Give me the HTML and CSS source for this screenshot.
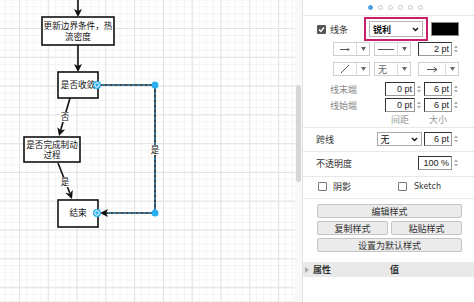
FILE: index.html
```html
<!DOCTYPE html>
<html lang="zh-CN">
<head>
    <meta charset="UTF-8">
    <title>流程图编辑</title>
    <link rel="stylesheet" href="styles.css">
</head>
<body>
<div class="app">
    <div class="canvas">
        <svg class="diagram" width="295" height="302" viewBox="0 0 295 302">
            <!-- 连线 -->
            <g stroke="#111" stroke-width="1.6" fill="none">
                <line x1="78" y1="0" x2="78" y2="12"/>
                <line x1="78" y1="45" x2="78" y2="67"/>
                <line x1="70" y1="98" x2="60.7" y2="130"/>
                <line x1="58" y1="163" x2="69.8" y2="193"/>
            </g>
            <g fill="#111">
                <polygon points="74,9 78,17 82,9 78,11"/>
                <polygon points="74,64 78,72 82,64 78,66"/>
                <polygon points="65.1,129.4 59,136 57.4,127.2 60.7,130.2"/>
                <polygon points="72.8,190.1 72,199 65.4,193 69.8,193.4"/>
            </g>
            <!-- 选中的连线 -->
            <path d="M97 85H155V213H106" stroke="#111" stroke-width="1.6" fill="none"/>
            <path d="M97 85H155V213H106" stroke="#2fa8e8" stroke-width="1" stroke-dasharray="3 2" fill="none"/>
            <polygon points="108,209 100,213 108,217 106,213" fill="#111"/>

            <!-- 节点 -->
            <g fill="#fff" stroke="#111" stroke-width="1.6">
                <rect x="42" y="17" width="72" height="28"/>
                <rect x="58" y="72" width="40" height="26"/>
                <rect x="24" y="137" width="56" height="25"/>
                <rect x="58" y="200" width="40" height="27"/>
            </g>
            <g class="label" text-anchor="middle">
                <text x="78" y="29">更新边界条件，热</text>
                <text x="78" y="40">流密度</text>
                <text x="78" y="88">是否收敛</text>
                <text x="52" y="148">是否完成制动</text>
                <text x="52" y="158">过程</text>
                <text x="78" y="216">结束</text>
            </g>

            <!-- 连线标签 -->
            <rect x="60" y="112" width="10" height="10" fill="#fff"/>
            <rect x="60" y="177" width="10" height="10" fill="#fff"/>
            <rect x="150" y="145" width="10" height="10" fill="#fff"/>
            <g class="label" text-anchor="middle">
                <text x="65" y="120">否</text>
                <text x="65" y="185">是</text>
                <text x="155" y="153">是</text>
            </g>

            <!-- 控制点 -->
            <g fill="#29b0f0">
                <circle cx="155" cy="85" r="3.5"/>
                <circle cx="155" cy="213" r="3.5"/>
                <circle cx="97" cy="85" r="4"/>
                <circle cx="97" cy="213" r="4"/>
            </g>
            <g fill="none" stroke="#fff" stroke-width="1">
                <circle cx="97" cy="85" r="2.2"/>
                <circle cx="97" cy="213" r="2.2"/>
            </g>
        </svg>
    </div>

    <div class="scroll"><div class="thumb"></div></div>

    <div class="panel">
        <div class="dots">
            <span class="dot on"></span>
            <span class="dot"></span>
            <span class="dot"></span>
            <span class="dot"></span>
            <span class="dot"></span>
            <span class="dot"></span>
        </div>

        <div class="section first">
            <div class="row r1">
                <span class="check on"><svg width="7" height="7" viewBox="0 0 7 7"><path d="M1 3.6L2.8 5.4L6 1.5" stroke="#fff" stroke-width="1.4" fill="none"/></svg></span>
                <span class="lbl">线条</span>
                <div class="focus">
                    <div class="select bold">锐利<svg width="7" height="5" viewBox="0 0 7 5"><path d="M1 1L3.5 3.5L6 1" stroke="#111" stroke-width="1.4" fill="none"/></svg></div>
                </div>
                <span class="swatch"></span>
            </div>

            <div class="row r2">
                <div class="group">
                    <span class="cell"><svg width="12" height="5" viewBox="0 0 12 5"><path d="M1 2.5H10" stroke="#555"/><path d="M8.5 1L11 2.5L8.5 4z" fill="#555"/></svg></span>
                    <span class="drop"><svg width="5" height="4" viewBox="0 0 5 4"><path d="M0 0H5L2.5 4z" fill="#666"/></svg></span>
                </div>
                <div class="group">
                    <span class="cell"><svg width="16" height="3" viewBox="0 0 16 3"><path d="M0 1.5H16" stroke="#555"/></svg></span>
                    <span class="drop"><svg width="5" height="4" viewBox="0 0 5 4"><path d="M0 0H5L2.5 4z" fill="#666"/></svg></span>
                </div>
                <div class="num-set">
                    <span class="num w34">2 pt</span>
                    <span class="spin"><svg width="6" height="14" viewBox="0 0 6 14"><path d="M1 6L3 3.5L5 6z M1 8L3 10.5L5 8z" fill="#aaa"/></svg></span>
                </div>
            </div>

            <div class="row r3">
                <div class="group">
                    <span class="cell"><svg width="10" height="10" viewBox="0 0 10 10"><path d="M1 9L9 1" stroke="#555"/></svg></span>
                    <span class="drop"><svg width="5" height="4" viewBox="0 0 5 4"><path d="M0 0H5L2.5 4z" fill="#666"/></svg></span>
                </div>
                <div class="group">
                    <span class="cell left">无</span>
                    <span class="drop"><svg width="5" height="4" viewBox="0 0 5 4"><path d="M0 0H5L2.5 4z" fill="#666"/></svg></span>
                </div>
                <div class="group wide">
                    <span class="cell"><svg width="13" height="7" viewBox="0 0 13 7"><path d="M1 3.5H11M7.5 1L11 3.5L7.5 6" stroke="#555" fill="none"/></svg></span>
                    <span class="drop"><svg width="5" height="4" viewBox="0 0 5 4"><path d="M0 0H5L2.5 4z" fill="#666"/></svg></span>
                </div>
            </div>

            <div class="row r4">
                <span class="lbl grey">线末端</span>
                <div class="num-set">
                    <span class="num w30">0 pt</span>
                    <span class="spin"><svg width="6" height="14" viewBox="0 0 6 14"><path d="M1 6L3 3.5L5 6z M1 8L3 10.5L5 8z" fill="#aaa"/></svg></span>
                    <span class="num w28 gap">6 pt</span>
                    <span class="spin"><svg width="6" height="14" viewBox="0 0 6 14"><path d="M1 6L3 3.5L5 6z M1 8L3 10.5L5 8z" fill="#aaa"/></svg></span>
                </div>
            </div>

            <div class="row r5">
                <span class="lbl grey">线始端</span>
                <div class="num-set">
                    <span class="num w30">0 pt</span>
                    <span class="spin"><svg width="6" height="14" viewBox="0 0 6 14"><path d="M1 6L3 3.5L5 6z M1 8L3 10.5L5 8z" fill="#aaa"/></svg></span>
                    <span class="num w28 gap">6 pt</span>
                    <span class="spin"><svg width="6" height="14" viewBox="0 0 6 14"><path d="M1 6L3 3.5L5 6z M1 8L3 10.5L5 8z" fill="#aaa"/></svg></span>
                </div>
            </div>

            <div class="row r6">
                <div class="num-set">
                    <span class="unit w30">间距</span>
                    <span class="unit w28 gap2">大小</span>
                    <span class="unit w7"></span>
                </div>
            </div>
        </div>

        <div class="section jump">
            <div class="row">
                <span class="lbl w61">跨线</span>
                <div class="select small">无<svg width="7" height="5" viewBox="0 0 7 5"><path d="M1 1L3.5 3.5L6 1" stroke="#111" stroke-width="1.4" fill="none"/></svg></div>
                <span class="num w28 gap">6 pt</span>
                <span class="spin"><svg width="6" height="14" viewBox="0 0 6 14"><path d="M1 6L3 3.5L5 6z M1 8L3 10.5L5 8z" fill="#aaa"/></svg></span>
            </div>
        </div>

        <div class="section opacity">
            <div class="row">
                <span class="lbl">不透明度</span>
                <div class="num-set">
                    <span class="num w34">100 %</span>
                    <span class="spin"><svg width="6" height="14" viewBox="0 0 6 14"><path d="M1 6L3 3.5L5 6z M1 8L3 10.5L5 8z" fill="#aaa"/></svg></span>
                </div>
            </div>
        </div>

        <div class="section opts">
            <div class="row">
                <span class="check"></span>
                <span class="lbl opt">阴影</span>
                <span class="check"></span>
                <span class="lbl sketch">Sketch</span>
            </div>
        </div>

        <div class="buttons">
            <div class="btn">编辑样式</div>
            <div class="btn-row">
                <div class="btn">复制样式</div>
                <div class="btn">粘贴样式</div>
            </div>
            <div class="btn">设置为默认样式</div>
        </div>

        <div class="props">
            <span class="prop-key"><svg width="4" height="6" viewBox="0 0 4 6"><path d="M0 0L4 3L0 6z" fill="#aaa"/></svg>属性</span>
            <span>值</span>
        </div>
    </div>
</div>
</body>
</html>
```

FILE: styles.css
```css
* {
    box-sizing: border-box;
}
body {
    margin: 0;
    font-family: "Liberation Sans", "Noto Sans CJK SC", sans-serif;
    font-size: 9px;
    color: #333;
}
.app {
    display: flex;
    width: 474px;
    height: 302px;
    overflow: hidden;
}

/* 画布 */
.canvas {
    position: relative;
    width: 295px;
    height: 302px;
    background-color: #fff;
    background-image:
        linear-gradient(#e3e3e3 1px, transparent 1px),
        linear-gradient(90deg, #e3e3e3 1px, transparent 1px),
        linear-gradient(#f3f3f3 1px, transparent 1px),
        linear-gradient(90deg, #f3f3f3 1px, transparent 1px);
    background-size: 28.8px 28.8px, 28.8px 28.8px, 7.2px 7.2px, 7.2px 7.2px;
    background-position: 0 28px, 19px 0, 0 6.4px, 4.6px 0;
}
.diagram {
    position: absolute;
    left: 0;
    top: 0;
}
.label text {
    font-family: "Liberation Sans", "Noto Sans CJK SC", sans-serif;
    font-size: 8.6px;
    fill: #111;
}
.scroll {
    width: 8px;
    background: #f8f8f8;
    border-right: 1px solid #e2e2e2;
    padding: 85px 0 0 1px;
}
.thumb {
    width: 5px;
    height: 97px;
    background: #d6d6d6;
    border-radius: 3px;
}

/* 样式面板 */
.panel {
    width: 171px;
    background: #fff;
}
.dots {
    height: 16px;
    border-bottom: 1px solid #e8e8e8;
    display: flex;
    align-items: center;
    gap: 5px;
    padding-left: 65px;
}
.dot {
    width: 5px;
    height: 5px;
    border-radius: 50%;
    border: 1px solid #c8c8c8;
    background: #fff;
}
.dot.on {
    background: #4a9ee0;
    border-color: #4a9ee0;
}
.section {
    border-bottom: 1px solid #e8e8e8;
    padding: 0 15px 0 13px;
}
.row {
    display: flex;
    align-items: center;
    height: 14px;
}
.lbl {
    color: #333;
    white-space: nowrap;
}
.lbl.grey {
    color: #888;
}
.check {
    width: 9px;
    height: 9px;
    margin-left: 1px;
    border: 1px solid #777;
    border-radius: 1px;
    background: #fff;
    display: flex;
    align-items: center;
    justify-content: center;
}
.check.on {
    background: #555;
    border-color: #555;
}

.first {
    padding-top: 1px;
    padding-bottom: 2px;
}
.r1 {
    height: 24px;
}
.r1 .lbl {
    margin-left: 4px;
    width: 34px;
}
.focus {
    width: 64px;
    height: 24px;
    border: 2px solid #c4206c;
    padding: 2px 3px;
}
.select {
    height: 16px;
    border: 1px solid #b5b5b5;
    background: #fff;
    display: flex;
    align-items: center;
    justify-content: space-between;
    padding: 0 3px 0 3px;
    color: #111;
}
.select.bold {
    font-weight: bold;
}
.swatch {
    margin-left: 3px;
    width: 28px;
    height: 14px;
    background: #000;
    border: 1px solid #888;
}
.r2 {
    margin-top: 1px;
}
.r3, .r4 {
    margin-top: 6px;
}
.r5 {
    margin-top: 2px;
}
.r6 {
    margin-top: 1px;
    height: 12px;
}
.r2 .group:first-child,
.r3 .group:first-child {
    margin-left: 17px;
}
.group {
    width: 37px;
    height: 14px;
    border: 1px solid #cfcfcf;
    display: flex;
    margin-right: 4px;
}
.group.wide {
    width: 41px;
    margin-left: auto;
    margin-right: 0;
}
.r3 .group:nth-child(2) {
    margin-right: 0;
}
.cell {
    flex: 1;
    display: flex;
    align-items: center;
    justify-content: center;
    color: #666;
}
.cell.left {
    justify-content: flex-start;
    padding-left: 3px;
}
.drop {
    width: 13px;
    border-left: 1px solid #dcdcdc;
    display: flex;
    align-items: center;
    justify-content: center;
}
.num-set {
    margin-left: auto;
    display: flex;
    align-items: center;
}
.num {
    height: 14px;
    border: 1px solid #999;
    border-top-color: #333;
    border-left-color: #333;
    text-align: right;
    padding-right: 2px;
    line-height: 12px;
    color: #222;
    background: #fff;
}
.w34 { width: 34px; }
.w30 { width: 30px; }
.w28 { width: 28px; }
.w7 { width: 7px; }
.gap { margin-left: 2px; }
.gap2 { margin-left: 9px; }
.spin {
    width: 6px;
    height: 14px;
    margin-left: 1px;
    display: flex;
}
.r4 .lbl,
.r5 .lbl {
    margin-left: 14px;
}
.unit {
    color: #999;
    text-align: center;
}

.jump {
    padding-top: 4px;
    padding-bottom: 5px;
}
.w61 {
    width: 61px;
}
.select.small {
    width: 46px;
    height: 14px;
    border-color: #aaa;
}
.opacity {
    padding-top: 4px;
    padding-bottom: 6px;
}
.opacity .row {
    height: 14px;
}
.opts {
    padding-top: 4px;
    padding-bottom: 7px;
}
.opts .row {
    height: 10px;
}
.opts .check {
    margin-left: 2px;
}
.lbl.opt {
    margin-left: 6px;
    width: 63px;
}
.lbl.sketch {
    margin-left: 7px;
    font-family: "DejaVu Sans", sans-serif;
    font-size: 8px;
}

.buttons {
    padding: 5px 12px 0 14px;
    display: flex;
    flex-direction: column;
    gap: 3px;
}
.btn-row {
    display: flex;
    gap: 3px;
}
.btn-row .btn {
    flex: 1;
}
.btn {
    height: 14px;
    border: 1px solid #c4c4c4;
    border-radius: 2px;
    background: #ebebeb;
    display: flex;
    align-items: center;
    justify-content: center;
    color: #333;
}
.props {
    margin-top: 10px;
    height: 15px;
    background: #e9e9e9;
    display: flex;
    align-items: center;
    font-weight: bold;
    color: #333;
}
.prop-key {
    width: 87px;
    display: flex;
    align-items: center;
    gap: 4px;
    padding-left: 2px;
}
```
